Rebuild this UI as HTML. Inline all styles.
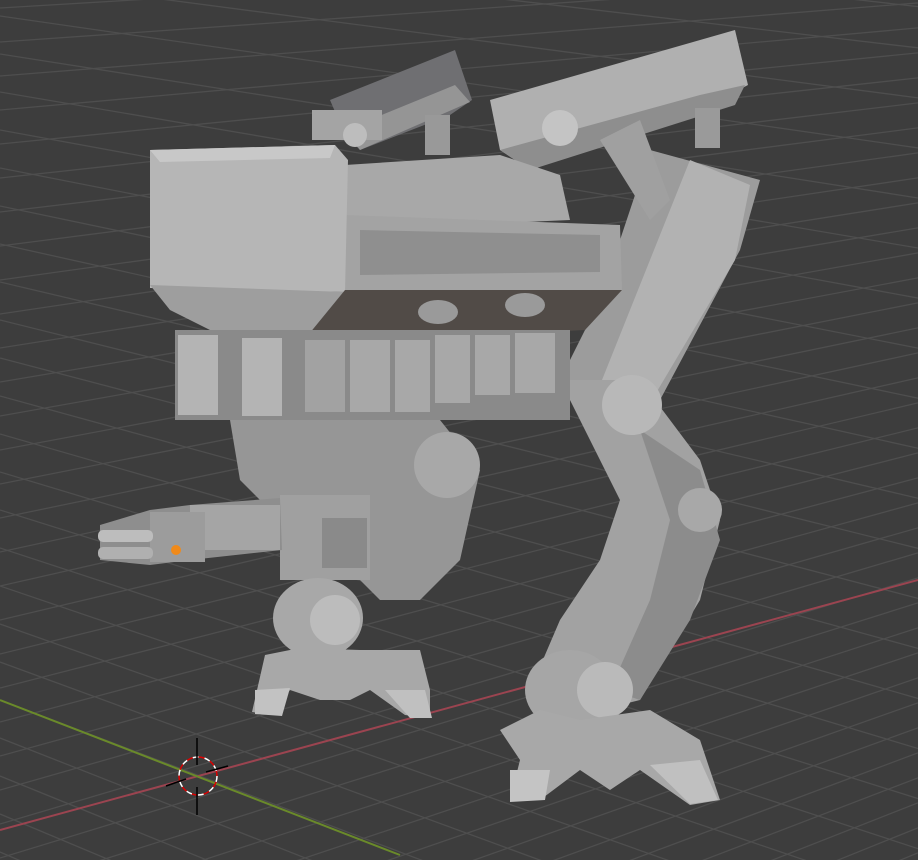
<!DOCTYPE html>
<html><head><style>
html,body{margin:0;padding:0;background:#3d3d3d;width:918px;height:860px;overflow:hidden}
svg{display:block}
</style></head><body>
<svg id="s" width="918" height="860" viewBox="0 0 918 860" xmlns="http://www.w3.org/2000/svg">
<rect width="918" height="860" fill="#3d3d3d"/>
<g id="grid" stroke="#4e4e4e" stroke-width="1.3" fill="none"></g>
<line x1="0" y1="830" x2="918" y2="580" stroke="#9b4450" stroke-width="2"/>
<line x1="0" y1="700" x2="400" y2="855" stroke="#6a8a2a" stroke-width="2"/>
<circle cx="198" cy="776" r="19" fill="none" stroke="#fff" stroke-width="1.5" stroke-dasharray="6 6"/>
<circle cx="198" cy="776" r="19" fill="none" stroke="#d00" stroke-width="1.5" stroke-dasharray="6 6" stroke-dashoffset="6"/>
<line x1="197" y1="738" x2="197" y2="765" stroke="#000" stroke-width="1.5"/>
<line x1="197" y1="787" x2="197" y2="815" stroke="#000" stroke-width="1.5"/>
<line x1="166" y1="786" x2="186" y2="779" stroke="#000" stroke-width="1.5"/>
<line x1="206" y1="772" x2="228" y2="766" stroke="#000" stroke-width="1.5"/>

<g>
<polygon points="650,150 760,180 740,250 660,400 600,420 560,380 600,300" fill="#9c9c9c"/>
<polygon points="690,160 750,185 735,260 640,420 590,410" fill="#b2b2b2"/>
<polygon points="560,380 640,380 700,460 720,520 700,600 640,700 560,720 530,690 560,620 600,560 620,500" fill="#a2a2a2"/>
<polygon points="640,430 700,470 720,540 690,620 640,700 610,690 650,600 670,520" fill="#8c8c8c"/>
<circle cx="632" cy="405" r="30" fill="#b8b8b8"/>
<circle cx="700" cy="510" r="22" fill="#a8a8a8"/>
<ellipse cx="570" cy="690" rx="45" ry="40" fill="#a6a6a6"/>
<circle cx="605" cy="690" r="28" fill="#bababa"/>
<polygon points="500,730 540,710 580,720 650,710 700,740 720,800 690,805 640,770 610,790 580,770 540,800 510,800 520,760" fill="#a8a8a8"/>
<polygon points="510,770 550,770 545,800 510,802" fill="#c4c4c4"/>
<polygon points="650,765 700,760 718,800 690,804" fill="#c0c0c0"/>
</g>
<polygon points="490,100 735,30 748,85 700,110 530,170 500,150" fill="#b0b0b0"/>
<polygon points="500,150 700,95 745,85 735,105 530,170" fill="#8e8e8e"/>
<circle cx="560" cy="128" r="18" fill="#c4c4c4"/>
<polygon points="600,140 640,120 670,200 650,220" fill="#a0a0a0"/>
<rect x="695" y="108" width="25" height="40" fill="#9a9a9a"/>
<polygon points="330,100 455,50 472,100 450,115 360,150 345,135" fill="#6f6f72"/>
<polygon points="345,130 455,85 470,102 360,150" fill="#959595"/>
<rect x="312" y="110" width="70" height="30" fill="#a4a4a4"/>
<circle cx="355" cy="135" r="12" fill="#bdbdbd"/>
<rect x="425" y="115" width="25" height="40" fill="#999"/>
<polygon points="345,165 500,155 560,175 570,220 345,230" fill="#a8a8a8"/>
<polygon points="345,215 620,225 622,290 345,292" fill="#a3a3a3"/>
<polygon points="360,230 600,235 600,272 360,275" fill="#8f8f8f"/>
<polygon points="150,150 335,145 348,160 345,292 150,288" fill="#b6b6b6"/>
<polygon points="150,150 335,145 330,158 160,162" fill="#c8c8c8"/>
<polygon points="150,285 345,292 340,340 300,345 210,330 170,310" fill="#9e9e9e"/>
<polygon points="345,290 622,290 585,330 300,345" fill="#514b47"/>
<ellipse cx="438" cy="312" rx="20" ry="12" fill="#9a9a9a"/>
<ellipse cx="525" cy="305" rx="20" ry="12" fill="#9a9a9a"/>
<rect x="175" y="330" width="395" height="90" fill="#8a8a8a"/>
<rect x="178" y="335" width="40" height="80" fill="#b4b4b4"/>
<rect x="242" y="338" width="40" height="78" fill="#b4b4b4"/>
<rect x="305" y="340" width="40" height="72" fill="#a2a2a2"/>
<rect x="350" y="340" width="40" height="72" fill="#a8a8a8"/>
<rect x="395" y="340" width="35" height="72" fill="#a8a8a8"/>
<rect x="435" y="335" width="35" height="68" fill="#a8a8a8"/>
<rect x="475" y="335" width="35" height="60" fill="#a8a8a8"/>
<rect x="515" y="333" width="40" height="60" fill="#a8a8a8"/>
<polygon points="230,420 440,420 480,470 460,560 420,600 380,600 340,560 300,540 240,480" fill="#969696"/>
<circle cx="447" cy="465" r="33" fill="#a8a8a8"/>
<rect x="280" y="495" width="90" height="85" fill="#a0a0a0"/>
<rect x="322" y="518" width="45" height="50" fill="#8a8a8a"/>
<polygon points="100,525 150,510 190,505 280,498 282,550 190,560 150,565 100,560" fill="#8e8e8e"/>
<rect x="190" y="505" width="90" height="45" fill="#a5a5a5"/>
<rect x="150" y="512" width="55" height="50" fill="#9c9c9c"/>
<rect x="98" y="530" width="55" height="12" rx="5" fill="#bdbdbd"/>
<rect x="98" y="547" width="55" height="12" rx="5" fill="#b0b0b0"/>
<circle cx="176" cy="550" r="5" fill="#f08a1a"/>
<ellipse cx="318" cy="618" rx="45" ry="40" fill="#a8a8a8"/>
<circle cx="335" cy="620" r="25" fill="#bcbcbc"/>
<polygon points="265,655 300,648 360,650 420,650 430,690 430,718 405,715 370,690 350,700 320,700 290,690 270,715 252,712" fill="#a8a8a8"/>
<polygon points="255,690 290,688 282,716 255,714" fill="#c2c2c2"/>
<polygon points="385,690 425,690 432,718 410,718" fill="#c0c0c0"/>
</svg>
<script>
var g=document.getElementById('grid'),h='';
for(var b=-400;b<1400;b+=34){var s=-0.3*Math.max(0.15,(b+200)/1040);h+='<line x1="0" y1="'+b+'" x2="918" y2="'+(b+918*s)+'"/>';}
for(var c=-1200;c<1000;c+=38){var s2=0.38*Math.max(0.3,Math.min(1.2,(c+400)/1100));h+='<line x1="0" y1="'+c+'" x2="918" y2="'+(c+918*s2)+'"/>';}
g.innerHTML=h;
</script>
</body></html>
